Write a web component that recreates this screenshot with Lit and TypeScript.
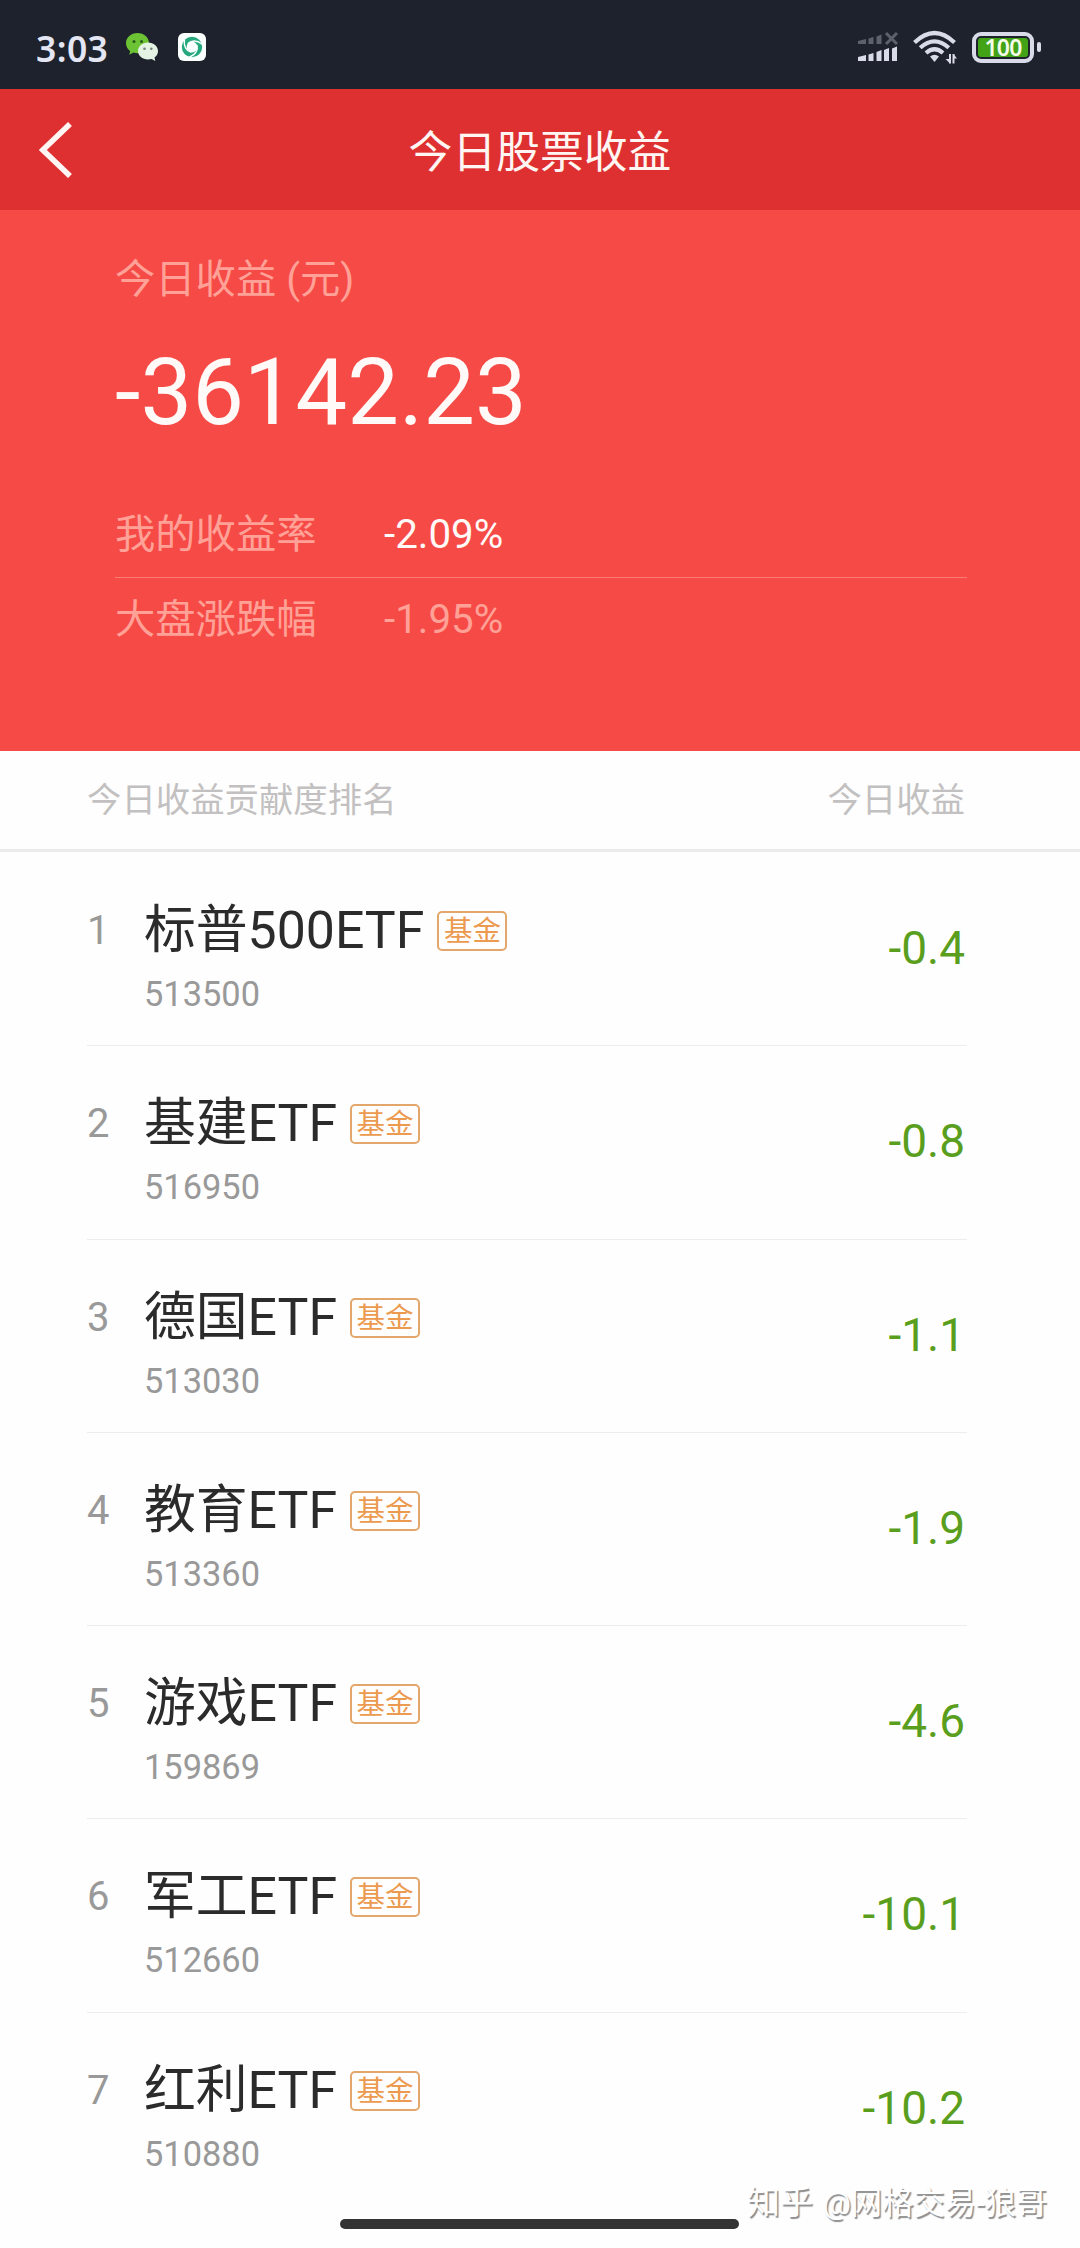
import { LitElement, html, css, svg } from "lit";
import { customElement, property } from "lit/decorators.js";

interface Holding {
  rank: number;
  name: string;
  code: string;
  profit: string;
}

const HOLDINGS: Holding[] = [
  { rank: 1, name: "标普500ETF", code: "513500", profit: "-0.4" },
  { rank: 2, name: "基建ETF", code: "516950", profit: "-0.8" },
  { rank: 3, name: "德国ETF", code: "513030", profit: "-1.1" },
  { rank: 4, name: "教育ETF", code: "513360", profit: "-1.9" },
  { rank: 5, name: "游戏ETF", code: "159869", profit: "-4.6" },
  { rank: 6, name: "军工ETF", code: "512660", profit: "-10.1" },
  { rank: 7, name: "红利ETF", code: "510880", profit: "-10.2" },
];

@customElement("status-bar")
export class StatusBar extends LitElement {
  static styles = css`
    :host {
      display: flex;
      box-sizing: border-box;
      height: 89px;
      padding: 5px 39px 0 36px;
      align-items: center;
      background: #1e222d;
      color: #e4e6f3;
    }
    .time {
      width: 90px;
      padding-top: 1px;
      font: 600 35.5px/40px "Noto Sans", sans-serif;
      letter-spacing: 0.4px;
    }
    .chat { width: 32px; height: 28px; margin-right: 20px; }
    .app { width: 28px; height: 28px; }
    .spacer { flex: 1; }
    .signal { width: 42px; height: 32px; margin-right: 14px; }
    .wifi { width: 44px; height: 34px; margin-right: 15px; }
    .battery { display: flex; align-items: center; }
    .cell {
      display: flex;
      box-sizing: border-box;
      width: 62px;
      height: 31px;
      padding: 2px;
      border: 4.5px solid #d9dbe8;
      border-radius: 9px;
    }
    .charge {
      flex: 1;
      border-radius: 3px;
      background: #43a317;
      color: #f4fbe9;
      text-align: center;
      font: 600 23px/18px "Noto Sans", sans-serif;
      letter-spacing: -0.8px;
    }
    .tip {
      width: 4px;
      height: 10px;
      margin-left: 3px;
      border-radius: 2px;
      background: #d9dbe8;
    }
  `;

  render() {
    return html`
      <div class="time">3:03</div>
      <svg class="chat" viewBox="0 0 32 28">
        <path fill="#6cc334" d="M11.5 0C5 0 0 4.5 0 10.2c0 3.200 1.600 6 4.200 8L3.200 21.800l4.300-2.200c1.300.4 2.600.6 4 .6C18 20.200 23 15.800 23 10.200S18 0 11.500 0Z"/>
        <path fill="#e4f3e3" d="M22 9.500c-5.600 0-10 3.800-10 8.500s4.400 8.500 10 8.500c1.300 0 2.500-.2 3.600-.5l3.700 1.900-.8-3.300c2.200-1.600 3.500-3.900 3.500-6.600 0-4.700-4.400-8.500-10-8.500Z"/>
        <circle cx="8" cy="8.400" r="1.500" fill="#285b1c"/><circle cx="15.500" cy="8.400" r="1.500" fill="#285b1c"/>
        <circle cx="18.500" cy="15.700" r="1.300" fill="#73847a"/><circle cx="25.300" cy="15.700" r="1.300" fill="#73847a"/>
      </svg>
      <svg class="app" viewBox="0 0 28 28">
        <rect width="28" height="28" rx="6" fill="#fbfffd"/>
        <circle cx="14" cy="14" r="7.800" fill="none" stroke="#25a87e" stroke-width="4.800"/>
        ${[10, 130, 250].map((a) => svg`<path d="M9.200 11.500C12 7.500 17.500 6 23.500 9.500" fill="none" stroke="#fbfffd" stroke-width="1.300" transform="rotate(${a} 14 14)"/>`)}
      </svg>
      <div class="spacer"></div>
      <svg class="signal" viewBox="0 0 42 32">
        <g fill="#5d616b">
          <path d="M1 10l8-2v5H1zM11.500 7.500l5-1.500v7h-5zM19.500 5.500l5-2v9.500h-5z"/>
          <path d="M29 2l11 11M40 2L29 13" stroke="#5d616b" stroke-width="3"/>
        </g>
        <path fill="#d9dbe8" d="M1 26l8-2v6H1zM11.500 23.500l5-1.500v8h-5zM19.500 21l5-2v11h-5zM27 19l5-2v13h-5zM35 17.500l5-2V30h-5z"/>
      </svg>
      <svg class="wifi" viewBox="0 0 44 34" fill="none" stroke="#d9dbe8" stroke-width="4.200">
        <path d="M1.500 12.500Q21.500-6.500 41.500 12.500"/>
        <path d="M7.200 17.800Q21.500 5 35.800 17.800"/>
        <path d="M13 23Q21.500 15.500 30 23"/>
        <path fill="#d9dbe8" stroke="none" d="M17 26.500q4.500-3.500 9 0l-4.500 5.500z"/>
        <path stroke-width="2" d="M37 24v9.500M40.500 33.500V24"/>
        <path fill="#d9dbe8" stroke="none" d="M32.500 29h4.500v4.500zM44 28.500h-3.500V24z"/>
      </svg>
      <div class="battery">
        <div class="cell"><div class="charge">100</div></div>
        <div class="tip"></div>
      </div>
    `;
  }
}

@customElement("nav-header")
export class NavHeader extends LitElement {
  @property() heading = "";

  static styles = css`
    :host {
      display: grid;
      grid-template-columns: 120px 1fr 120px;
      align-items: center;
      height: 121px;
      background: #de3031;
      color: #fff6f3;
    }
    .back { width: 34px; height: 56px; margin-left: 39px; }
    .title {
      padding-top: 6px;
      text-align: center;
      font-size: 43.8px;
      line-height: 60px;
    }
  `;

  render() {
    return html`
      <svg class="back" viewBox="0 0 34 56" fill="none" stroke="#fff6f3" stroke-width="5.600">
        <path d="M31 2L3.800 28L31 54"/>
      </svg>
      <div class="title">${this.heading}</div>
    `;
  }
}

@customElement("profit-summary")
export class ProfitSummary extends LitElement {
  static styles = css`
    :host {
      display: block;
      box-sizing: border-box;
      height: 541px;
      padding: 42px 113px 0 115px;
      background: #f64a46;
      color: #ffa197;
      font-size: 40.3px;
    }
    .label { line-height: 56px; }
    .total {
      margin-top: 35px;
      color: #fff9f7;
      font-size: 92px;
      line-height: 100px;
    }
    .rates { margin-top: 57px; }
    .rate {
      display: flex;
      box-sizing: border-box;
      height: 77px;
      padding-top: 9px;
      line-height: 52px;
    }
    .rate + .rate { padding-top: 16px; border-top: 1px solid #fa7c74; }
    .key { width: 269px; }
    .own { color: #fff9f7; }
  `;

  render() {
    return html`
      <div class="label">今日收益 (元)</div>
      <div class="total">-36142.23</div>
      <div class="rates">
        <div class="rate"><span class="key">我的收益率</span><span class="own">-2.09%</span></div>
        <div class="rate"><span class="key">大盘涨跌幅</span><span>-1.95%</span></div>
      </div>
    `;
  }
}

@customElement("holding-row")
export class HoldingRow extends LitElement {
  @property({ attribute: false }) holding!: Holding;

  static styles = css`
    :host {
      display: flex;
      box-sizing: border-box;
      height: 193.3px;
      margin: 0 113px 0 87px;
      padding-right: 2px;
      border-bottom: 1px solid #ededed;
    }
    .rank {
      width: 57px;
      padding-top: 48px;
      color: #999;
      font-size: 40px;
      line-height: 60px;
    }
    .info { flex: 1; padding-top: 48px; }
    .line { display: flex; align-items: center; height: 60px; }
    .name { color: #2b2b2b; font-size: 51.8px; line-height: 60px; }
    .tag {
      box-sizing: border-box;
      width: 70px;
      height: 40px;
      margin-left: 13px;
      border: 2px solid #e3a76c;
      border-radius: 5px;
      color: #ec9a4f;
      text-align: center;
      font-size: 28.5px;
      line-height: 38px;
    }
    .code { margin-top: 13px; color: #999; font-size: 34.4px; line-height: 40px; }
    .profit { padding-top: 70px; color: #5a9e1e; font-size: 46px; line-height: 50px; }
  `;

  render() {
    const h = this.holding;
    return html`
      <div class="rank">${h.rank}</div>
      <div class="info">
        <div class="line"><span class="name">${h.name}</span><span class="tag">基金</span></div>
        <div class="code">${h.code}</div>
      </div>
      <div class="profit">${h.profit}</div>
    `;
  }
}

@customElement("app-root")
export class AppRoot extends LitElement {
  static styles = css`
    :host {
      display: block;
      position: relative;
      width: 1080px;
      height: 2248px;
      overflow: hidden;
      background: #fefefe;
      font-family: Roboto, "Noto Sans CJK SC", sans-serif;
    }
    .columns {
      display: flex;
      box-sizing: border-box;
      justify-content: space-between;
      height: 101px;
      padding: 0 115px 0 87px;
      border-bottom: 3px solid #ebebeb;
      color: #c2c0c0;
      font-size: 34.4px;
      line-height: 98px;
    }
    .list { padding-top: 1px; }
    holding-row:last-child { border-bottom: none; }
    .home {
      position: absolute;
      left: 340px;
      top: 2219px;
      width: 399px;
      height: 10px;
      border-radius: 5px;
      background: #333;
    }
    .watermark {
      position: absolute;
      left: 747px;
      top: 2179px;
      color: #fff;
      font-size: 31.3px;
      line-height: 48px;
      white-space: pre;
      text-shadow: 1.5px 1.5px 1px #8d8d8d;
    }
    .brand { margin-right: 2px; font-size: 33px; }
  `;

  render() {
    return html`
      <status-bar></status-bar>
      <nav-header heading="今日股票收益"></nav-header>
      <profit-summary></profit-summary>
      <div class="columns"><span>今日收益贡献度排名</span><span>今日收益</span></div>
      <div class="list">${HOLDINGS.map((h) => html`<holding-row .holding=${h}></holding-row>`)}</div>
      <div class="home"></div>
      <div class="watermark"><span class="brand">知乎</span> @网格交易-狼哥</div>
    `;
  }
}
